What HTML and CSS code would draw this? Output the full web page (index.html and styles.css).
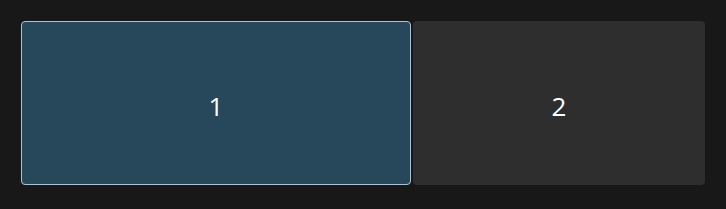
FILE: index.html
```html
<!DOCTYPE html>
<html lang="en">
<head>
    <meta charset="UTF-8">
    <meta name="viewport" content="width=device-width, initial-scale=1.0">
    <title>Panes</title>
    <link rel="stylesheet" href="styles.css">
</head>
<body>

<div class="panes">
    <div class="pane selected">1</div>
    <div class="pane">2</div>
</div>

</body>
</html>
```

FILE: styles.css
```css
body {
    margin: 0;
    padding: 21px;
    background-color: #181818;
    font-family: 'Open Sans', 'Noto Sans', sans-serif;
    color: #ffffff;
}
.panes {
    display: flex;
    gap: 2px;
    height: 164px;
}
.pane {
    display: flex;
    align-items: center;
    justify-content: center;
    background-color: #2e2e2e;
    border: 1px solid transparent;
    border-radius: 4px;
    font-size: 26px;
    padding-top: 6px;
    box-sizing: border-box;
}
.pane:first-child {
    width: 390px;
}
.pane:last-child {
    flex: 1;
}
.selected {
    background-color: #27475a;
    border-color: #a9c4d4;
}
```
